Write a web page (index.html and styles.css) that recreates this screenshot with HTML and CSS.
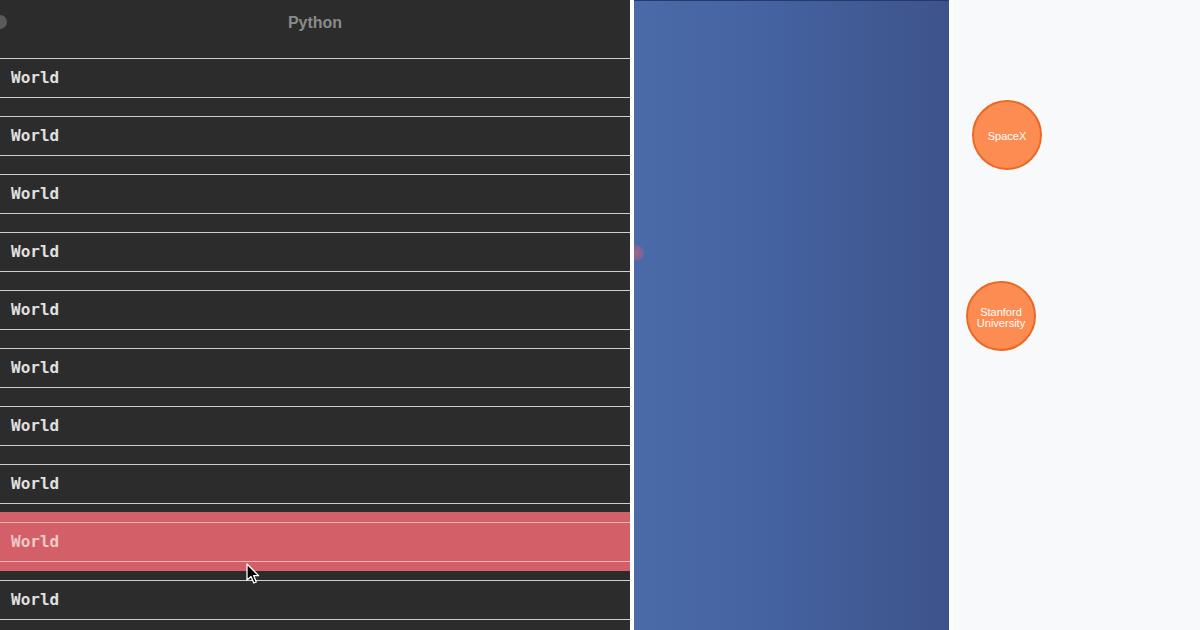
FILE: index.html
```html
<!DOCTYPE html>
<html>
<head>
<meta charset="utf-8">
<link rel="stylesheet" href="styles.css">
</head>
<body>
<div class="app">
  <section class="editor">
    <header class="titlebar">
      <span class="dot"></span>
      <span class="title">Python</span>
    </header>
    <ul class="list">
      <li class="row">World</li>
      <li class="row">World</li>
      <li class="row">World</li>
      <li class="row">World</li>
      <li class="row">World</li>
      <li class="row">World</li>
      <li class="row">World</li>
      <li class="row">World</li>
      <li class="row active">World</li>
      <li class="row">World</li>
    </ul>
    <svg class="cursor" width="14" height="22" viewBox="0 0 14 22">
      <path d="M1 1 L1 17 L5 13.5 L7.8 20 L10.3 19 L7.6 12.6 L12.6 12.6 Z" fill="#000" stroke="#fff" stroke-width="1.3" stroke-linejoin="round"/>
    </svg>
  </section>
  <div class="divider"></div>
  <section class="canvas">
    <span class="blip"></span>
  </section>
  <section class="graph">
    <div class="node node-spacex">SpaceX</div>
    <div class="node node-stanford">Stanford<br>University</div>
  </section>
</div>
</body>
</html>
```
FILE: styles.css
```css
html, body {
  margin: 0;
  padding: 0;
}
body {
  width: 1200px;
  height: 630px;
  overflow: hidden;
  background: #ffffff;
}
.app {
  display: flex;
  width: 1200px;
  height: 630px;
}
.editor {
  position: relative;
  width: 630px;
  flex: none;
  background: #2c2c2c;
  overflow: hidden;
}
.titlebar {
  position: relative;
  height: 58px;
  display: flex;
  align-items: center;
  justify-content: center;
}
.dot {
  position: absolute;
  left: -7px;
  top: 15px;
  width: 14px;
  height: 14px;
  border-radius: 50%;
  background: #5a5a5a;
}
.title {
  font-family: "Liberation Sans", Arial, sans-serif;
  font-weight: bold;
  font-size: 16px;
  color: #8a8a8a;
  margin-top: -12px;
}
.list {
  list-style: none;
  margin: 0;
  padding: 0;
}
.row {
  height: 38px;
  box-sizing: content-box;
  border-top: 1px solid #cfcfcf;
  border-bottom: 1px solid #cfcfcf;
  margin-bottom: 18px;
  padding-left: 11px;
  display: flex;
  align-items: center;
  font-family: "DejaVu Sans Mono", "Liberation Mono", monospace;
  font-weight: bold;
  font-size: 16px;
  line-height: 36px;
  padding-bottom: 0;
  color: #e0e0e0;
}
.row.active {
  background: #d36068;
  box-shadow: 0 -10px 0 #d36068, 0 9px 0 #d36068;
  border-color: #f1b3b6;
  color: #eec9ca;
}
.cursor {
  position: absolute;
  left: 246px;
  top: 563px;
}
.divider {
  width: 4px;
  flex: none;
  background: #ffffff;
}
.canvas {
  position: relative;
  width: 315px;
  flex: none;
  background: linear-gradient(90deg, #4a6ba7 0%, #4462a0 45%, #3e538a 100%);
  border-top: 1px solid #26396a;
  box-sizing: border-box;
  overflow: hidden;
}
.blip {
  position: absolute;
  left: -6px;
  top: 244px;
  width: 16px;
  height: 16px;
  border-radius: 50%;
  background: radial-gradient(circle, rgba(205,95,125,0.75) 0%, rgba(205,95,125,0.35) 55%, rgba(205,95,125,0) 100%);
}
.graph {
  position: relative;
  flex: 1;
  background: #f8f9fb;
  border-left: 4px solid #fcfdfe;
}
.node {
  position: absolute;
  width: 66px;
  height: 66px;
  box-sizing: content-box;
  border-radius: 50%;
  background: #fd8c52;
  border: 2px solid #ea6a25;
  display: flex;
  align-items: center;
  justify-content: center;
  text-align: center;
  font-family: "Liberation Sans", Arial, sans-serif;
  font-size: 11px;
  line-height: 11px;
  color: #ffffff;
}
.node-spacex {
  left: 19px;
  top: 100px;
  padding-top: 0;
  height: 66px;
}
.node-spacex span {
  display: block;
}
.node-stanford {
  left: 13px;
  top: 281px;
}
.node-spacex, .node-stanford {
  line-height: 11px;
}
.node-stanford {
  padding-top: 4px;
  height: 62px;
}
.node-spacex {
  padding-top: 2px;
  height: 64px;
}
```
